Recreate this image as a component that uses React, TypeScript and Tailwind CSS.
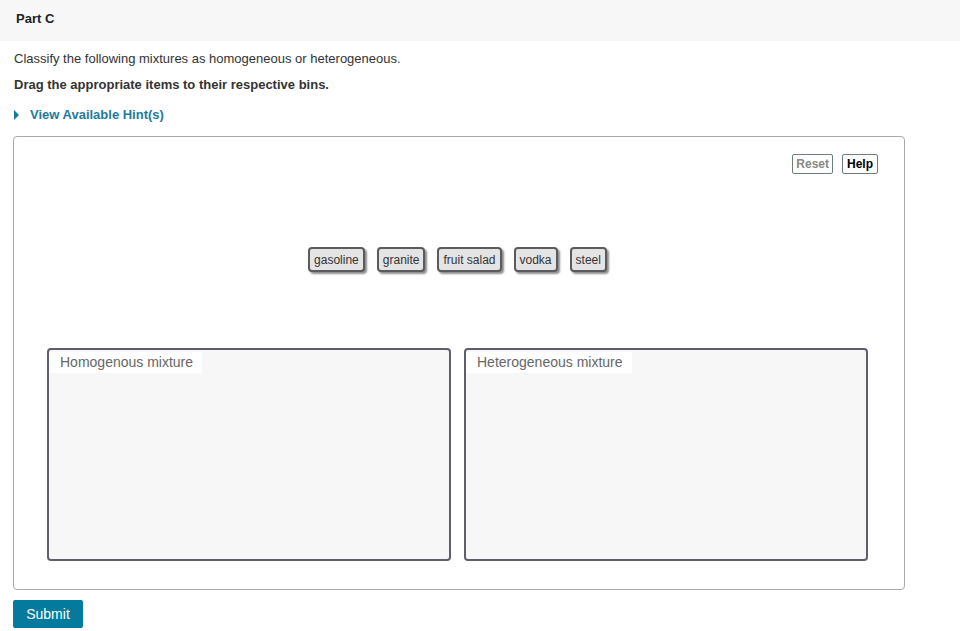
import React from "react";

const chips = ["gasoline", "granite", "fruit salad", "vodka", "steel"];

export default function App() {
  return (
    <div className="w-[960px] h-[631px] bg-white overflow-hidden text-[#333]" style={{ fontFamily: '"Liberation Sans", Arial, sans-serif' }}>
      <div className="h-[41px] bg-[#f7f7f7] pl-[16px] pt-[11px]">
        <span className="block text-[13px] leading-[16px] font-bold text-[#222]">Part C</span>
      </div>
      <div className="pl-[14px]">
        <p className="text-[13px] leading-[16px] mt-[10px] text-[#333]">Classify the following mixtures as homogeneous or heterogeneous.</p>
        <p className="text-[13px] leading-[16px] mt-[10px] font-bold text-[#333]">Drag the appropriate items to their respective bins.</p>
        <div className="flex items-center mt-[14px] h-[16px]">
          <svg width="5" height="10" viewBox="0 0 5 10" className="mr-[11px]">
            <polygon points="0,0 5,5 0,10" fill="#1a7a99" />
          </svg>
          <span className="text-[13px] leading-[16px] font-bold text-[#1f7a9a]">View Available Hint(s)</span>
        </div>
      </div>
      <div className="ml-[13px] mt-[13px] w-[892px] h-[454px] border border-[#aaaaaa] rounded-[4px] flex flex-col">
        <div className="flex justify-end gap-[9px] pr-[26px] mt-[17px]">
          <button className="h-[20px] px-[3px] text-[12px] font-bold text-[#888] border border-[#6f7f7f] rounded-[2px] bg-white leading-none">Reset</button>
          <button className="h-[20px] px-[4px] text-[12px] font-bold text-black border border-[#6f7f7f] rounded-[2px] bg-white leading-none">Help</button>
        </div>
        <div className="flex justify-center gap-[12px] mt-[73px] pr-[3px]">
          {chips.map((c) => (
            <div key={c} className="h-[25px] px-[4px] flex items-center text-[12px] text-[#333] bg-[#e4e4e4] border-2 border-[#5a5a5f] rounded-[4px] shadow-[2px_2px_2px_rgba(0,0,0,0.45)]">
              {c}
            </div>
          ))}
        </div>
        <div className="flex gap-[13px] ml-[33px] mt-[76px]">
          {["Homogenous mixture", "Heterogeneous mixture"].map((l) => (
            <div key={l} className="w-[404px] h-[213px] bg-[#f7f7f7] border-2 border-[#5e5e6e] rounded-[4px]">
              <span className="inline-block bg-white h-[21px] leading-[21px] pl-[11px] pr-[9px] text-[14px] text-[#666]">{l}</span>
            </div>
          ))}
        </div>
      </div>
      <button className="ml-[13px] mt-[10px] w-[70px] h-[28px] bg-[#047b9c] text-white text-[14px] rounded-[2px]">Submit</button>
    </div>
  );
}
